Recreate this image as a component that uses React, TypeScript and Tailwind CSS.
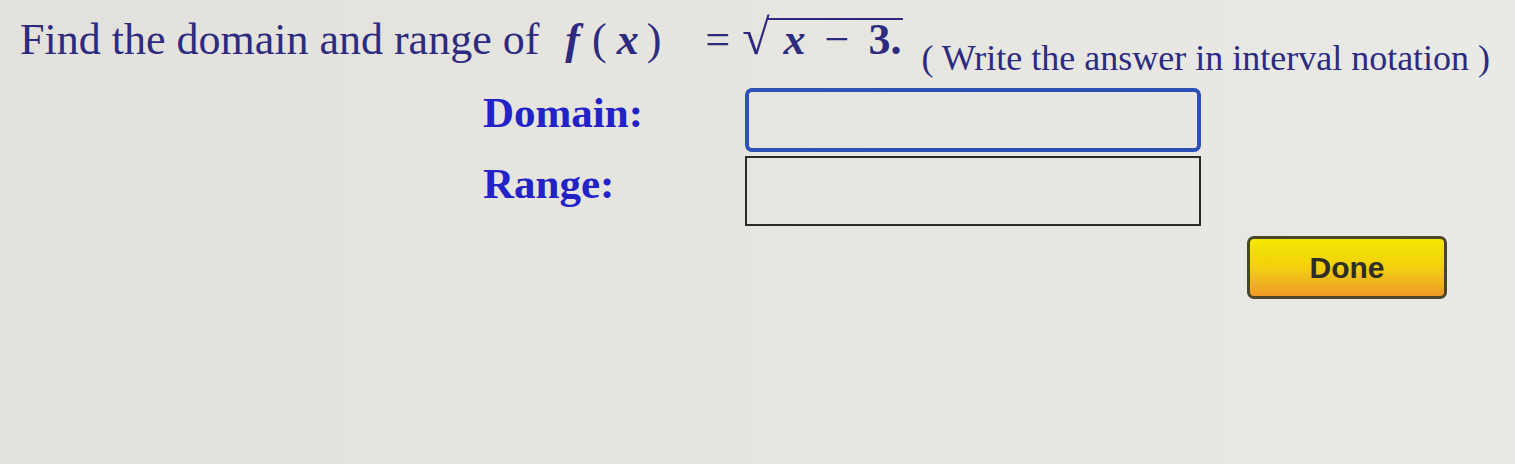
import React from "react";

const serif = { fontFamily: '"Liberation Serif", "Times New Roman", serif' };

function Radical() {
  return (
    <span className="inline-flex items-baseline">
      <span className="text-[50px] font-normal leading-[44px]">√</span>
      <span className="-ml-[2px] border-t-[2px] border-[#2d2b80] pl-[16px] pr-[2px] font-bold leading-[40px]">
        <span className="italic">x</span>
        <span className="mx-[19px] font-normal">−</span>
        <span>3.</span>
      </span>
    </span>
  );
}

export default function App() {
  return (
    <div
      className="relative h-[464px] w-[1515px] overflow-hidden bg-gradient-to-r from-[#e2e1dc] via-[#e6e5e0] to-[#e9e9e5] text-[#2d2b80]"
      style={serif}
    >
      <div className="flex items-baseline whitespace-nowrap pl-[20px] pt-[14px] text-[44px] leading-[52px]">
        <span>Find the domain and range of</span>
        <span className="ml-[26px] font-bold italic">f</span>
        <span className="ml-[12px]">(</span>
        <span className="ml-[10px] font-bold italic">x</span>
        <span className="ml-[8px]">)</span>
        <span className="ml-[44px]">=</span>
        <span className="ml-[12px]">
          <Radical />
        </span>
        <span className="ml-[18px] translate-y-[16px] text-[36px]">( Write the answer in interval notation )</span>
      </div>

      <div className="mt-[20px] grid grid-cols-[262px_456px] gap-y-[3px] pl-[483px]">
        <div className="flex -translate-y-[7px] items-center text-[43px] font-bold text-[#2222c6]">Domain:</div>
        <div className="h-[64px] rounded-[7px] border-[4px] border-[#2c52b4]" />
        <div className="flex -translate-y-[6px] items-center text-[43px] font-bold text-[#2222c6]">Range:</div>
        <div className="h-[70px] border-[2px] border-[#2a2a2a]" />
      </div>

      <div className="mt-[10px] pl-[1247px]">
        <button
          type="button"
          className="flex h-[63px] w-[200px] items-center justify-center rounded-[7px] border-[3px] border-[#4a4628] bg-gradient-to-b from-[#f3e800] via-[#f1d00c] to-[#ee9a26] text-[30px] font-bold text-[#2e2e24]"
          style={{ fontFamily: '"Liberation Sans", Arial, sans-serif' }}
        >
          Done
        </button>
      </div>
    </div>
  );
}
